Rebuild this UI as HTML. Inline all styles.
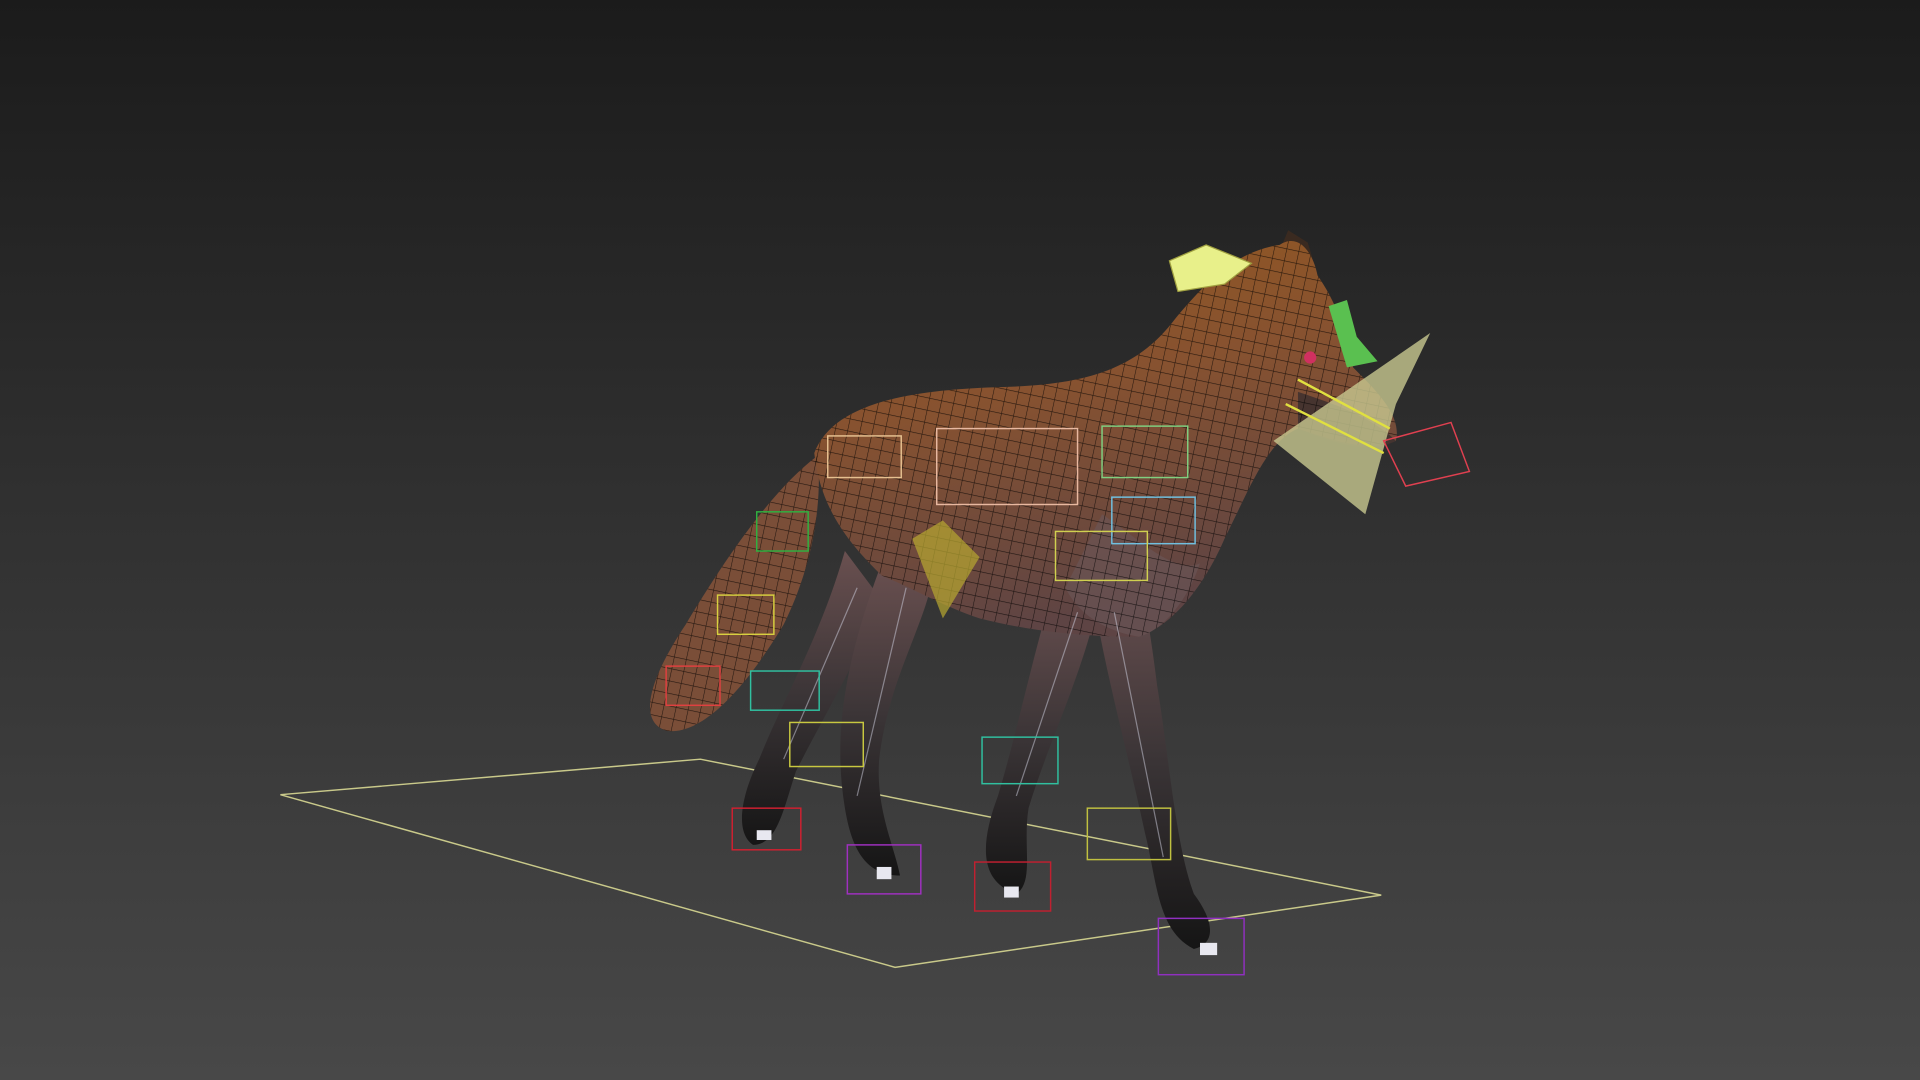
<!DOCTYPE html>
<html><head><meta charset="utf-8"><style>
html,body{margin:0;padding:0;width:1920px;height:1080px;overflow:hidden;background:#2c2c2c}
svg{display:block}
</style></head><body>
<svg width="1920" height="1080" viewBox="0 0 1568 882" preserveAspectRatio="none" xmlns="http://www.w3.org/2000/svg">
<defs>
<linearGradient id="bg" x1="0" y1="0" x2="0" y2="1">
<stop offset="0" stop-color="#1b1b1b"/><stop offset="0.35" stop-color="#2b2b2b"/><stop offset="1" stop-color="#484848"/>
</linearGradient>
<linearGradient id="fur" x1="0" y1="0" x2="0.3" y2="1">
<stop offset="0" stop-color="#93581f"/><stop offset="0.45" stop-color="#875230"/><stop offset="1" stop-color="#5e4444"/>
</linearGradient>
<linearGradient id="leg" x1="0" y1="0" x2="0" y2="1">
<stop offset="0" stop-color="#6a5050"/><stop offset="0.5" stop-color="#3a3436"/><stop offset="1" stop-color="#151515"/>
</linearGradient>
<pattern id="wire" width="10" height="10" patternUnits="userSpaceOnUse" patternTransform="rotate(12)">
<path d="M0 0H10M0 0V10" stroke="#000" stroke-width="0.9" fill="none" opacity="0.7"/>
</pattern>
</defs>
<rect width="1568" height="882" fill="url(#bg)"/>
<polygon points="229,649 572,620 1128,731 731,790" fill="none" stroke="#c9c98a" stroke-width="1.2"/>
<g id="fox">
<path d="M668 372 C630 400 590 460 560 510 C530 555 520 590 545 597 C575 600 610 560 640 510 C660 470 672 420 668 372Z" fill="#7a4e38"/>
<path d="M690 450 C670 520 640 570 620 620 C605 650 600 680 615 690 C635 690 640 660 650 630 C670 590 700 540 720 490Z" fill="url(#leg)"/>
<path d="M720 460 C690 540 680 600 690 660 C695 690 705 715 735 715 C730 690 715 660 718 620 C725 560 750 520 760 480Z" fill="url(#leg)"/>
<path d="M860 480 C840 550 830 600 815 650 C800 690 800 720 830 730 C845 720 835 690 840 660 C855 610 880 560 895 500Z" fill="url(#leg)"/>
<path d="M890 470 C900 540 920 610 935 680 C945 720 945 760 975 775 C995 770 990 750 975 730 C960 690 955 620 945 560 C940 520 935 490 930 470Z" fill="url(#leg)"/>
<path d="M1045 205 L1052 188 L1068 198 L1076 225 Z" fill="#3a2a20"/>
<path d="M665 370 C680 330 740 318 820 316 C890 314 930 300 960 260 C985 230 1010 205 1045 200 C1060 190 1072 205 1076 225 C1090 245 1100 270 1105 300 C1125 320 1145 340 1140 360 C1120 370 1090 360 1060 350 C1035 360 1020 400 1000 440 C985 475 960 510 930 520 C880 520 840 515 800 505 C770 495 745 480 720 470 C700 450 670 420 665 370Z" fill="url(#fur)"/>
<path d="M1060 320 C1090 330 1120 340 1140 360 C1120 372 1090 362 1060 350Z" fill="#3a2e2e" opacity="0.8"/>
<path d="M900 420 C930 440 960 470 980 460 C970 490 950 515 930 520 C900 515 880 500 870 480Z" fill="#6a5658" opacity="0.6"/>
<path d="M665 370 C680 330 740 318 820 316 C890 314 930 300 960 260 C985 230 1010 205 1045 200 C1060 190 1072 205 1076 225 C1090 245 1100 270 1105 300 C1125 320 1145 340 1140 360 C1120 370 1090 360 1060 350 C1035 360 1020 400 1000 440 C985 475 960 510 930 520 C880 520 840 515 800 505 C770 495 745 480 720 470 C700 450 670 420 665 370Z" fill="url(#wire)"/>
<path d="M668 372 C630 400 590 460 560 510 C530 555 520 590 545 597 C575 600 610 560 640 510 C660 470 672 420 668 372Z" fill="url(#wire)"/>
<g stroke="#cfd0e0" stroke-width="1" opacity="0.5" fill="none">
<path d="M700 480 L640 620"/><path d="M740 480 L700 650"/><path d="M880 500 L830 650"/><path d="M910 500 L950 700"/>
</g>
<polygon points="955,213 985,200 1022,215 1000,232 962,238" fill="#e8f08a" stroke="#a0a040"/>
<polygon points="1040,360 1168,272 1140,330 1115,420" fill="#c8c890" opacity="0.8"/>
<polygon points="1085,250 1100,245 1108,275 1125,295 1100,300" fill="#5ac050"/>
<polygon points="745,440 770,425 800,455 770,505" fill="#b8a830" opacity="0.7"/>
<g fill="none" stroke-width="1.2">
<rect x="676" y="356" width="60" height="34" stroke="#e6c090"/>
<rect x="765" y="350" width="115" height="62" stroke="#e8b8a0"/>
<rect x="900" y="348" width="70" height="42" stroke="#80d080"/>
<rect x="908" y="406" width="68" height="38" stroke="#70c0e0"/>
<rect x="862" y="434" width="75" height="40" stroke="#d0d050"/>
<rect x="618" y="418" width="42" height="32" stroke="#30b040"/>
<rect x="586" y="486" width="46" height="32" stroke="#d8d040"/>
<rect x="544" y="544" width="44" height="32" stroke="#e04040"/>
<rect x="613" y="548" width="56" height="32" stroke="#30c0a0"/>
<rect x="645" y="590" width="60" height="36" stroke="#c8c840"/>
<rect x="802" y="602" width="62" height="38" stroke="#30c0a0"/>
<rect x="888" y="660" width="68" height="42" stroke="#c0c040"/>
<rect x="598" y="660" width="56" height="34" stroke="#d02030"/>
<rect x="692" y="690" width="60" height="40" stroke="#a030c0"/>
<rect x="796" y="704" width="62" height="40" stroke="#c02030"/>
<rect x="946" y="750" width="70" height="46" stroke="#9030c0"/>
<polygon points="1130,360 1185,345 1200,385 1148,397" stroke="#e04050"/>
</g>
<g fill="#e8e8f0"><rect x="618" y="678" width="12" height="8"/><rect x="716" y="708" width="12" height="10"/><rect x="820" y="724" width="12" height="9"/><rect x="980" y="770" width="14" height="10"/></g>
<path d="M1060 310 L1135 350 M1050 330 L1130 370" stroke="#e0e040" stroke-width="2"/>
<circle cx="1070" cy="292" r="5" fill="#d03060"/>
</g>
</svg>
</body></html>
